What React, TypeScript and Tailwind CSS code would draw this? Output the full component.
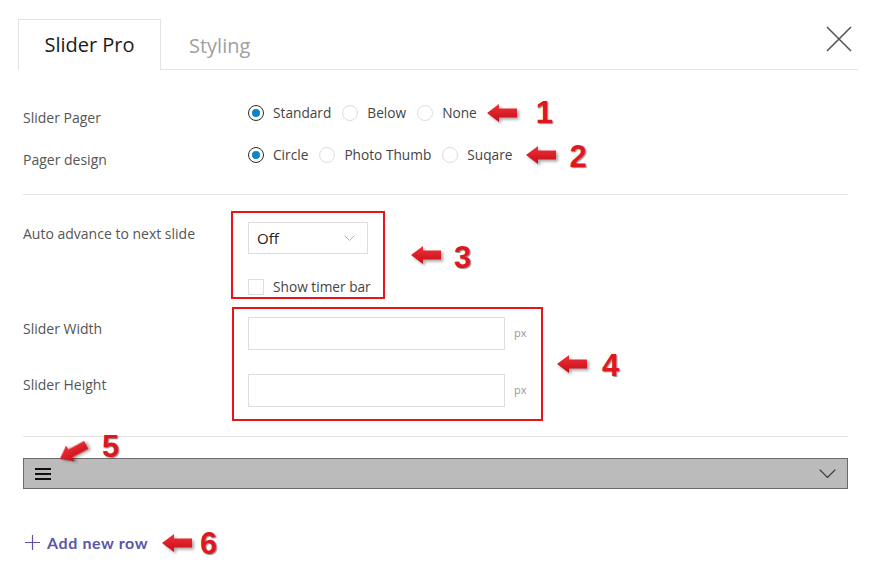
import React from 'react';

const Arrow: React.FC<{ className?: string }> = ({ className }) => (
  <svg width="32" height="20" viewBox="0 0 32 20" className={className} style={{ filter: 'drop-shadow(2px 2px 1.5px rgba(0,0,0,0.35))' }}>
    <defs>
      <linearGradient id="ag" x1="0" y1="0" x2="0" y2="1">
        <stop offset="0" stopColor="#f0323a" />
        <stop offset="1" stopColor="#c70d16" />
      </linearGradient>
    </defs>
    <polygon points="1,10 13,1 13,5.5 31,5.5 31,14.5 13,14.5 13,19" fill="url(#ag)" />
  </svg>
);

const Num: React.FC<{ n: string; className?: string }> = ({ n, className = '' }) => (
  <span
    className={`font-['Liberation_Sans',sans-serif] font-bold text-[31px] leading-none text-[#df1720] [text-shadow:1px_1px_1px_rgba(0,0,0,0.45)] ${className}`}
  >
    {n}
  </span>
);

const Radio: React.FC<{ label: string; checked?: boolean }> = ({ label, checked }) => (
  <label className="flex items-center gap-[9px] mr-[11px]">
    <span
      className={`w-4 h-4 rounded-full flex items-center justify-center bg-white ${
        checked ? 'border-[1.5px] border-[#2b2b2b]' : 'border border-[#dedede]'
      }`}
    >
      {checked && <span className="w-[8px] h-[8px] rounded-full bg-[#0a86c3]" />}
    </span>
    <span className="text-[13.7px] text-[#444]">{label}</span>
  </label>
);

export default function App() {
  return (
    <div className="w-[877px] h-[576px] bg-white relative font-['Open_Sans',sans-serif] text-[#555]">
      {/* Tabs */}
      <div className="flex pt-[19px] pl-[18px] pr-[19px]">
        <div className="w-[143px] h-[51px] border border-b-0 border-[#e3e3e3] flex items-center justify-center text-[20px] text-[#1a1a1a] bg-white">
          Slider Pro
        </div>
        <div className="flex-1 flex border-b border-[#e3e3e3]">
          <div className="pl-[28px] pt-[12px] text-[20px] text-[#a0a0a0]">Styling</div>
          <div className="flex-1" />
          <svg width="26" height="26" viewBox="0 0 26 26" className="mt-[7px] mr-[6px]">
            <path d="M1 1 L25 25 M25 1 L1 25" stroke="#555" strokeWidth="1.6" fill="none" />
          </svg>
        </div>
      </div>

      <div className="pl-[23px] pr-[29px]">
        {/* Pager */}
        <div className="pt-[33px] pb-[29px] border-b border-[#e3e3e3]">
          <div className="flex items-start h-[20px]">
            <div className="w-[225px] text-[14px] mt-[4px]">Slider Pager</div>
            <div className="flex items-center h-[20px]">
              <Radio label="Standard" checked />
              <Radio label="Below" />
              <Radio label="None" />
              <Arrow className="ml-[-2px]" />
              <Num n="1" className="ml-[18px] mt-[-2px]" />
            </div>
          </div>
          <div className="flex items-start h-[20px] mt-[22px]">
            <div className="w-[225px] text-[14px] mt-[4px]">Pager design</div>
            <div className="flex items-center h-[20px]">
              <Radio label="Circle" checked />
              <Radio label="Photo Thumb" />
              <Radio label="Suqare" />
              <Arrow className="ml-[2px]" />
              <Num n="2" className="ml-[12px] mt-[2px]" />
            </div>
          </div>
        </div>

        {/* Auto advance */}
        <div className="pt-[16px] pb-[15px] border-b border-[#e3e3e3]">
          <div className="flex items-start">
            <div className="w-[208px] text-[14px] mt-[12px]">Auto advance to next slide</div>
            <div className="w-[154px] h-[88px] border-2 border-[#e8141c] pl-[15px] pt-[9px]">
              <div className="w-[120px] h-[32px] border border-[#dedede] flex items-center justify-between pl-[8px] pr-[12px]">
                <span className="text-[15px] text-[#222]">Off</span>
                <svg width="11" height="7" viewBox="0 0 11 7">
                  <path d="M0.5 0.5 L5.5 5.5 L10.5 0.5" stroke="#b5b5b5" strokeWidth="1" fill="none" />
                </svg>
              </div>
              <div className="flex items-center gap-[9px] mt-[23px]">
                <span className="w-4 h-4 border border-[#dedede] bg-white" />
                <span className="text-[13.7px] text-[#444]">Show timer bar</span>
              </div>
            </div>
            <div className="flex items-center h-[88px] ml-[25px]">
              <Arrow />
              <Num n="3" className="ml-[12px] mt-[4px]" />
            </div>
          </div>

          <div className="flex items-start mt-[8px]">
            <div className="w-[209px] text-[14px] flex flex-col">
              <span className="mt-[11px]">Slider Width</span>
              <span className="mt-[35px]">Slider Height</span>
            </div>
            <div className="w-[311px] h-[114px] border-2 border-[#e8141c] pl-[14px] pt-[8px]">
              <div className="flex items-center">
                <div className="w-[257px] h-[33px] border border-[#dedede]" />
                <span className="ml-[9px] text-[11px] text-[#999]">px</span>
              </div>
              <div className="flex items-center mt-[24px]">
                <div className="w-[257px] h-[33px] border border-[#dedede]" />
                <span className="ml-[9px] text-[11px] text-[#999]">px</span>
              </div>
            </div>
            <div className="flex items-center h-[114px] ml-[13px]">
              <Arrow />
              <Num n="4" className="ml-[14px] mt-[2px]" />
            </div>
          </div>
        </div>

        {/* Collapsed row */}
        <div className="relative mt-[21px] h-[31px] bg-[#bbbbbb] border border-[#6b6b6b] flex items-center justify-between pl-[11px] pr-[11px]">
          <svg width="16" height="12" viewBox="0 0 16 12">
            <path d="M0 1 H16 M0 6 H16 M0 11 H16" stroke="#111" strokeWidth="2" />
          </svg>
          <svg width="17" height="10" viewBox="0 0 17 10">
            <path d="M0.7 0.7 L8.5 8.5 L16.3 0.7" stroke="#333" strokeWidth="1.2" fill="none" />
          </svg>
          <Arrow className="absolute left-[33px] top-[-17px] rotate-[-28deg]" />
          <Num n="5" className="absolute left-[78px] top-[-28px]" />
        </div>

        {/* Add new row */}
        <div className="flex items-center mt-[37px] ml-[2px]">
          <svg width="15" height="15" viewBox="0 0 15 15">
            <path d="M7.5 0 V15 M0 7.5 H15" stroke="#5b57a8" strokeWidth="1.2" />
          </svg>
          <span className="ml-[7px] font-['Lato',sans-serif] font-bold text-[16px] text-[#5b57a8] tracking-[0.6px]">
            Add new row
          </span>
          <Arrow className="ml-[13px]" />
          <Num n="6" className="ml-[7px] mt-[2px]" />
        </div>
      </div>
    </div>
  );
}
